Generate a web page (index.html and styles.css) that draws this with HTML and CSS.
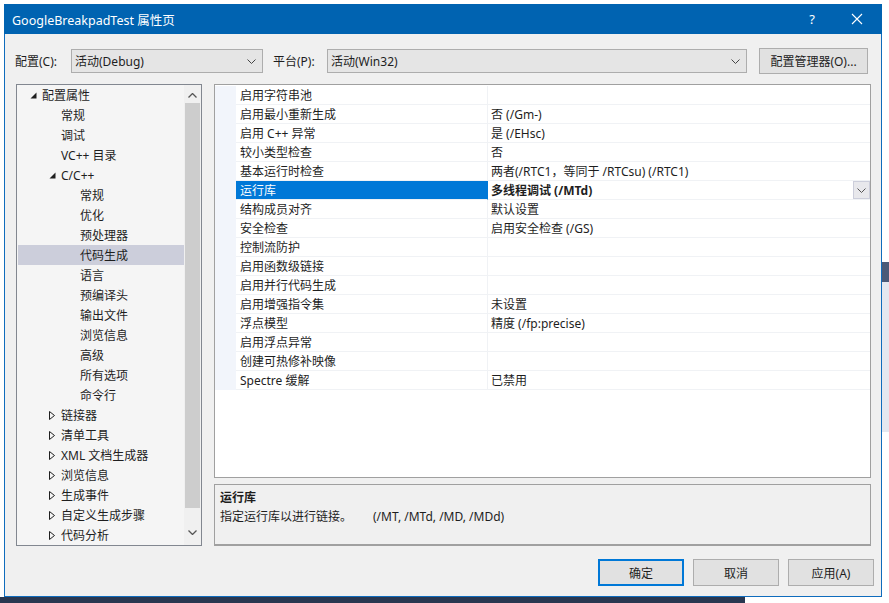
FILE: index.html
```html
<!DOCTYPE html>
<html lang="zh-CN">
<head>
    <meta charset="UTF-8">
    <title>GoogleBreakpadTest 属性页</title>
    <link rel="stylesheet" href="styles.css">
</head>
<body>
    <div class="backdrop-right"></div>
    <div class="backdrop-bottom"></div>
    <div class="window">
        <div class="titlebar">
            <span class="title">GoogleBreakpadTest 属性页</span>
            <span class="tb-help">?</span>
            <span class="tb-close"><svg width="12" height="12" viewBox="0 0 12 12"><path d="M1 1 L11 11 M11 1 L1 11" stroke="#fff" stroke-width="1.1"/></svg></span>
        </div>

        <div class="config-row">
            <span class="lbl">配置(C):</span>
            <div class="combo combo-cfg">活动(Debug)<svg class="chev" width="9" height="5" viewBox="0 0 9 5"><path d="M0.5 0.5 L4.5 4.5 L8.5 0.5" fill="none" stroke="#444"/></svg></div>
            <span class="lbl lbl-plat">平台(P):</span>
            <div class="combo combo-plat">活动(Win32)<svg class="chev" width="9" height="5" viewBox="0 0 9 5"><path d="M0.5 0.5 L4.5 4.5 L8.5 0.5" fill="none" stroke="#444"/></svg></div>
            <button class="btn btn-mgr">配置管理器(O)...</button>
        </div>

        <div class="main">
            <div class="tree">
                <ul class="tree-list" id="tree"></ul>
                <div class="vscroll">
                    <svg class="sc-arrow" width="9" height="5" viewBox="0 0 9 5"><path d="M0.5 4.5 L4.5 0.5 L8.5 4.5" fill="none" stroke="#555" stroke-width="1.3"/></svg>
                    <div class="thumb"></div>
                    <svg class="sc-arrow" width="9" height="5" viewBox="0 0 9 5"><path d="M0.5 0.5 L4.5 4.5 L8.5 0.5" fill="none" stroke="#555" stroke-width="1.3"/></svg>
                </div>
            </div>

            <div class="right-col">
                <div class="grid" id="grid"></div>
                <div class="desc">
                    <div class="desc-title">运行库</div>
                    <div class="desc-text">指定运行库以进行链接。<span class="desc-opts">(/MT, /MTd, /MD, /MDd)</span></div>
                </div>
            </div>
        </div>

        <div class="buttons">
            <button class="btn btn-ok">确定</button>
            <button class="btn">取消</button>
            <button class="btn">应用(A)</button>
        </div>
    </div>

    <script>
        const treeItems = [
            { text: '配置属性', level: 0, arrow: 'open' },
            { text: '常规', level: 1 },
            { text: '调试', level: 1 },
            { text: 'VC++ 目录', level: 1 },
            { text: 'C/C++', level: 1, arrow: 'open' },
            { text: '常规', level: 2 },
            { text: '优化', level: 2 },
            { text: '预处理器', level: 2 },
            { text: '代码生成', level: 2, selected: true },
            { text: '语言', level: 2 },
            { text: '预编译头', level: 2 },
            { text: '输出文件', level: 2 },
            { text: '浏览信息', level: 2 },
            { text: '高级', level: 2 },
            { text: '所有选项', level: 2 },
            { text: '命令行', level: 2 },
            { text: '链接器', level: 1, arrow: 'closed' },
            { text: '清单工具', level: 1, arrow: 'closed' },
            { text: 'XML 文档生成器', level: 1, arrow: 'closed' },
            { text: '浏览信息', level: 1, arrow: 'closed' },
            { text: '生成事件', level: 1, arrow: 'closed' },
            { text: '自定义生成步骤', level: 1, arrow: 'closed' },
            { text: '代码分析', level: 1, arrow: 'closed' }
        ];

        const openArrow = '<svg width="7" height="7" viewBox="0 0 7 7"><path d="M6.5 0.5 L6.5 6.5 L0.5 6.5 Z" fill="#1e1e1e"/></svg>';
        const closedArrow = '<svg width="6" height="9" viewBox="0 0 6 9"><path d="M0.5 0.5 L5.5 4.5 L0.5 8.5 Z" fill="none" stroke="#1e1e1e"/></svg>';

        const tree = document.getElementById('tree');
        treeItems.forEach(({ text, level, arrow, selected }) => {
            const icon = arrow === 'open' ? openArrow : arrow === 'closed' ? closedArrow : '';
            tree.innerHTML += `<li class="node lv${level}${selected ? ' sel' : ''}"><span class="arr">${icon}</span><span>${text}</span></li>`;
        });

        const props = [
            ['启用字符串池', ''],
            ['启用最小重新生成', '否 (/Gm-)'],
            ['启用 C++ 异常', '是 (/EHsc)'],
            ['较小类型检查', '否'],
            ['基本运行时检查', '两者(/RTC1，等同于 /RTCsu) (/RTC1)'],
            ['运行库', '多线程调试 (/MTd)', true],
            ['结构成员对齐', '默认设置'],
            ['安全检查', '启用安全检查 (/GS)'],
            ['控制流防护', ''],
            ['启用函数级链接', ''],
            ['启用并行代码生成', ''],
            ['启用增强指令集', '未设置'],
            ['浮点模型', '精度 (/fp:precise)'],
            ['启用浮点异常', ''],
            ['创建可热修补映像', ''],
            ['Spectre 缓解', '已禁用']
        ];

        const grid = document.getElementById('grid');
        props.forEach(([name, value, selected]) => {
            const drop = selected ? '<span class="drop"><svg width="9" height="5" viewBox="0 0 9 5"><path d="M0.5 0.5 L4.5 4.5 L8.5 0.5" fill="none" stroke="#555"/></svg></span>' : '';
            grid.innerHTML += `<div class="prow${selected ? ' sel' : ''}"><div class="pmargin"></div><div class="pname">${name}</div><div class="pval">${value}${drop}</div></div>`;
        });
    </script>
</body>
</html>
```

FILE: styles.css
```css
* { box-sizing: border-box; }
body { margin: 0; padding: 4px 0 0 4px; width: 889px; height: 603px; overflow: hidden; background: #fff; position: relative;
    font-family: "Noto Sans", "Noto Sans CJK SC", sans-serif; font-size: 12px; color: #1e1e1e; }
.backdrop-right { position: absolute; right: 0; top: 262px; width: 7px; height: 170px; background: #e4e8f0; border-top: 20px solid #4a5a78; }
.backdrop-bottom { position: absolute; left: 0; bottom: 0; width: 745px; height: 6px; background: #293750; }

.window { position: relative; width: 878px; height: 593px; background: #f0f0f0; border: 1px solid #0f6cbd; border-top: none; display: flex; flex-direction: column; }
.titlebar { height: 30px; background: #0063b1; color: #fff; display: flex; align-items: center; padding-left: 8px; margin: 0 -1px; }
.title { font-size: 12.5px; flex: 1; }
.tb-help { font-size: 13px; width: 44px; text-align: center; }
.tb-close { width: 46px; display: flex; justify-content: center; margin-right: 2px; }

.config-row { display: flex; align-items: center; height: 26px; margin: 14px 0 10px; padding-left: 10px; }
.lbl { width: 56px; }
.lbl-plat { width: 54px; margin-left: 10px; }
.combo { height: 24px; background: #e5e5e5; border: 1px solid #adadad; display: flex; align-items: center; padding-left: 3px; position: relative; }
.combo-cfg { width: 192px; }
.combo-plat { width: 420px; }
.chev { position: absolute; right: 6px; top: 9px; }
.btn { font: inherit; color: #1e1e1e; background: #e1e1e1; border: 1px solid #adadad; height: 27px; width: 86px; padding: 0; }
.btn-mgr { width: 109px; height: 26px; margin-left: 12px; }

.main { display: flex; height: 462px; padding-left: 11px; }
.tree { width: 186px; border: 1px solid #828790; background: #f5f5f5; display: flex; }
.tree-list { list-style: none; margin: 0; padding: 0 0 0 1px; flex: 1; }
.node { height: 20px; display: flex; align-items: center; white-space: nowrap; }
.node .arr { width: 13px; display: flex; align-items: center; }
.lv0 { padding-left: 10px; }
.lv0 .arr { width: 14px; }
.lv0 .arr svg { margin-left: 2px; margin-top: 1px; }
.lv1 { padding-left: 30px; }
.lv1 .arr svg { margin-left: 1px; }
.lv2 { padding-left: 49px; }
.node.sel { background: #cccedb; }
.vscroll { width: 17px; background: #f0f0f0; display: flex; flex-direction: column; align-items: center; padding-top: 8px; }
.thumb { width: 15px; background: #cdcdcd; margin: 5px 0; height: 405px; }
.vscroll .sc-arrow:last-child { margin-top: 17px; }

.right-col { margin-left: 12px; width: 657px; display: flex; flex-direction: column; }
.grid { height: 394px; border: 1px solid #a0a0a0; background: #fff; padding-top: 1px; }
.prow { display: flex; height: 19px; }
.pmargin { width: 21px; background: #f2f5fb; }
.pname { width: 252px; padding: 2px 0 0 4px; border-bottom: 1px solid #f0f2f5; border-right: 1px solid #f0f2f5; line-height: 16px; white-space: nowrap; }
.pval { flex: 1; padding: 2px 0 0 3px; border-bottom: 1px solid #f0f2f5; line-height: 16px; white-space: nowrap; position: relative; }
.prow.sel .pname { background: #0078d7; color: #fff; border-right-color: #0078d7; }
.prow.sel .pval { font-weight: bold; }
.drop { position: absolute; right: 0; top: 0; width: 17px; height: 18px; background: #e8e8ec; border: 1px solid #cccedb; display: flex; align-items: center; justify-content: center; }
.desc { margin-top: 6px; height: 62px; border: 1px solid #a0a0a0; border-bottom-width: 2px; background: #f0f0f0; padding: 4px 5px; }
.desc-title { font-weight: bold; line-height: 18px; }
.desc-text { line-height: 20px; }
.desc-opts { margin-left: 21px; }

.buttons { display: flex; justify-content: flex-end; gap: 9px; padding-right: 7px; margin-top: 13px; }
.btn-ok { border: 2px solid #0078d7; }
```
